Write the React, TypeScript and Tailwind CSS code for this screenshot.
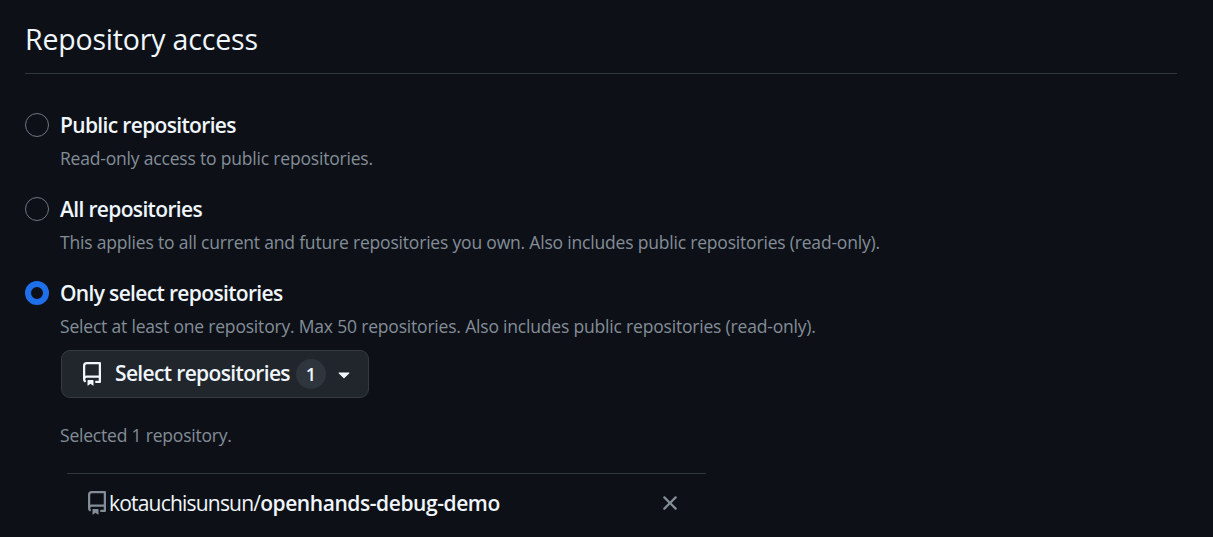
const REPO = "M2 2.5A2.5 2.5 0 0 1 4.5 0h8.75a.75.75 0 0 1 .75.75v12.5a.75.75 0 0 1-.75.75h-2.5a.75.75 0 0 1 0-1.5h1.75v-2h-8a1 1 0 0 0-.714 1.7.75.75 0 1 1-1.072 1.05A2.495 2.495 0 0 1 2 11.5Zm10.5-1h-8a1 1 0 0 0-1 1v6.708A2.486 2.486 0 0 1 4.5 9h8ZM5 12.25a.25.25 0 0 1 .25-.25h3.5a.25.25 0 0 1 .25.25v3.25a.25.25 0 0 1-.4.2l-1.45-1.087a.249.249 0 0 0-.3 0L5.4 15.7a.25.25 0 0 1-.4-.2Z";

function RepoIcon({ className }: { className: string }) {
  return (
    <svg viewBox="0 0 16 16" fill="currentColor" className={className}>
      <path d={REPO} />
    </svg>
  );
}

function Option({ title, desc, checked }: { title: string; desc: string; checked?: boolean }) {
  return (
    <div className="flex h-[84px] items-start">
      <div
        className={
          checked
            ? "mt-[1px] h-6 w-6 shrink-0 rounded-full border-[6px] border-[#1f6feb]"
            : "mt-[1px] h-6 w-6 shrink-0 rounded-full border border-[#6e7681]"
        }
      />
      <div className="ml-[11px]">
        <div className="text-[21px] leading-[26px] font-semibold tracking-[-0.66px] text-[#f0f6fc]">{title}</div>
        <div className="mt-[8px] text-[17.5px] leading-[24px] tracking-[-0.19px] text-[#848d97]">{desc}</div>
      </div>
    </div>
  );
}

export default function App() {
  return (
    <div className="h-[537px] w-[1213px] overflow-hidden bg-[#0d1117] pl-[25px] font-['Open_Sans','Noto_Sans',sans-serif]">
      <div className="w-[1152px] border-b border-[#30363d] pt-[18px] pb-[12px] text-[28.5px] leading-[43px] tracking-[-0.18px] text-[#f0f6fc]">
        Repository access
      </div>
      <div className="pt-[38px]">
        <Option title="Public repositories" desc="Read-only access to public repositories." />
        <Option title="All repositories" desc="This applies to all current and future repositories you own. Also includes public repositories (read-only)." />
        <Option title="Only select repositories" desc="Select at least one repository. Max 50 repositories. Also includes public repositories (read-only)." checked />
      </div>
      <div className="-mt-[14px] ml-[36px]">
        <div className="flex h-12 w-[308px] items-center rounded-[9px] border border-[#363b42] bg-[#21262d] pl-[18px] text-[#f0f6fc]">
          <RepoIcon className="h-6 w-6 shrink-0" />
          <span className="ml-[11px] text-[21px] font-semibold tracking-[-0.65px]">Select repositories</span>
          <span className="ml-[6px] flex h-[30px] w-[30px] items-center justify-center rounded-full bg-[#2f353d] text-[18px] font-semibold">1</span>
          <svg viewBox="0 0 16 16" fill="currentColor" className="ml-[6px] h-6 w-6">
            <path d="m4.427 7.427 3.396 3.396a.25.25 0 0 0 .354 0l3.396-3.396A.25.25 0 0 0 11.396 7H4.604a.25.25 0 0 0-.177.427Z" />
          </svg>
        </div>
        <div className="-ml-px mt-[25px] text-[17.5px] leading-[24px] tracking-[-0.2px] text-[#848d97]">Selected 1 repository.</div>
      </div>
      <div className="mt-[26px] ml-[42px] flex w-[639px] items-center border-t border-[#30363d] pt-[15px]">
        <RepoIcon className="ml-[18px] h-6 w-6 shrink-0 text-[#848d97]" />
        <span className="text-[21px] leading-[28px] tracking-[-0.62px] text-[#f0f6fc]">
          <span className="tracking-[-0.8px]">kotauchisunsun/</span>
          <span className="font-semibold tracking-[-0.43px]">openhands-debug-demo</span>
        </span>
        <svg viewBox="0 0 16 16" fill="currentColor" className="mr-[24px] ml-auto h-6 w-6 text-[#848d97]">
          <path d="M3.72 3.72a.75.75 0 0 1 1.06 0L8 6.94l3.22-3.22a.749.749 0 0 1 1.06 1.06L9.06 8l3.22 3.22a.749.749 0 1 1-1.06 1.06L8 9.06l-3.22 3.22a.749.749 0 1 1-1.06-1.06L6.94 8 3.72 4.78a.75.75 0 0 1 0-1.06Z" />
        </svg>
      </div>
    </div>
  );
}
